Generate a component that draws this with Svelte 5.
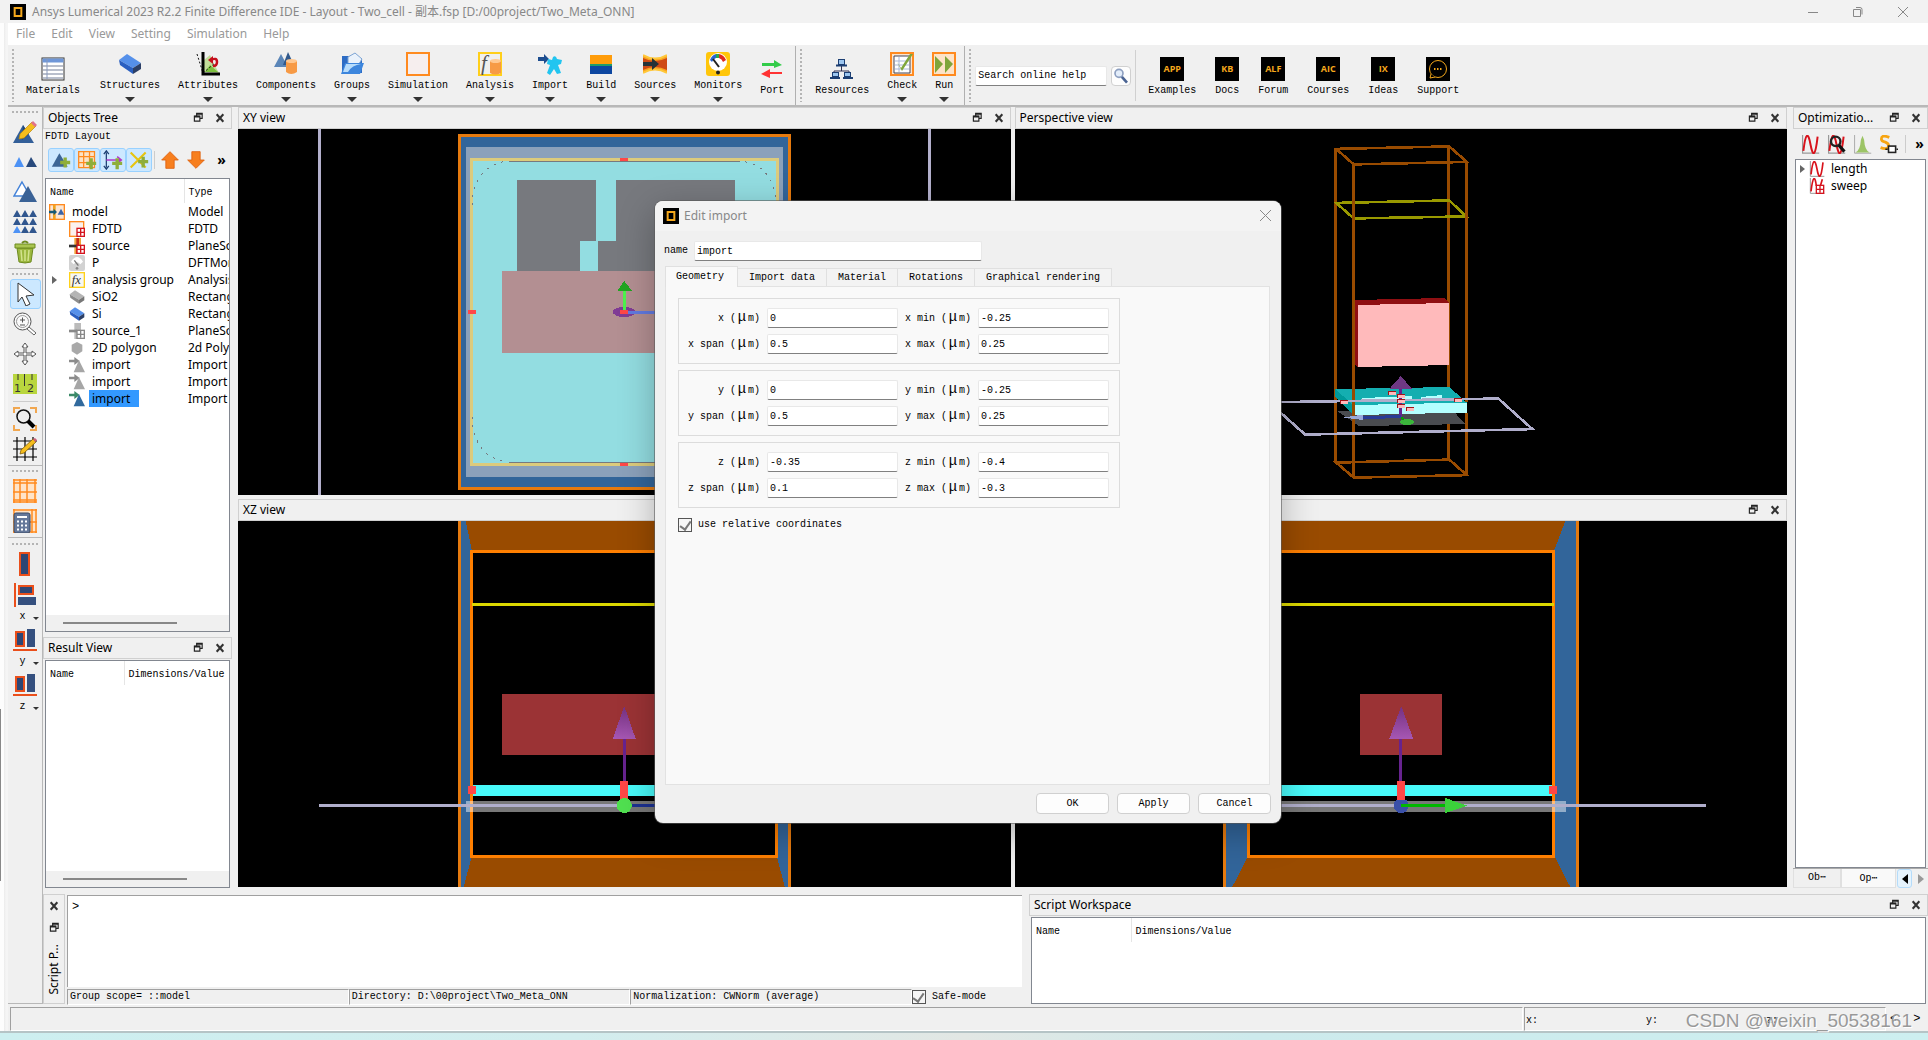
<script>
  const icons = {
    materials: `<rect x="1" y="1" width="22" height="22" fill="#fff" stroke="#333"/><rect x="1.500" y="1.500" width="21" height="4" fill="#6f97d8"/><path d="M2 9h20M2 13h20M2 17h20M2 21h20" stroke="#b9bfcc" stroke-width="2"/><path d="M6 2v20" stroke="#8899bb"/>`,
    box: `<path d="M1 8 9 2l14 9-8 5z" fill="#5590ea"/><path d="M1 8l14 8v6L2 13z" fill="#2a5fc0"/><path d="M15 16l8-5v6l-8 5z" fill="#2c3f66"/>`,
    grayBox: `<path d="M1 8 9 2l14 9-8 5z" fill="#b5b5b5"/><path d="M1 8l14 8v6L2 13z" fill="#8d8d8d"/><path d="M15 16l8-5v6l-8 5z" fill="#777"/>`,
    attributes: `<path d="M8 20V8l6-5 4 9 5 9z" fill="#c3dc9a"/><path d="M9 20l5-7 8 7z" fill="#7cc03e"/><path d="M1 2l6 19 12-10" fill="none" stroke="#111" stroke-dasharray="2 2"/><path d="M7 0v22h17" fill="none" stroke="#000" stroke-width="3"/><path d="M15 8q6-3 6 2 0 4-4 4" fill="none" stroke="#c40f1c" stroke-width="2.500"/><path d="M17 4l-5 4 5 4z" fill="#c40f1c"/>`,
    components: `<path d="M7 2l7 13H0z" fill="#5b86b8"/><path d="M14 0l6 13H9z" fill="#31598c"/><path d="M12 9v11q5 4 11 0V9z" fill="#f79a45"/><ellipse cx="17.500" cy="9" rx="5.500" ry="2" fill="#ffc891"/>`,
    groups: `<path d="M2 4h7l2 2h11v15H2z" fill="#2d6cc4"/><path d="M8 5l7-4 7 6-5 8H8z" fill="#eaf2fb" stroke="#7da4d4"/><path d="M1 22L5 11h19l-4 11z" fill="#3d86dd"/><path d="M3 20l3-8h15q-9 1-13 8z" fill="#b7dcfb"/>`,
    simulation: `<rect x="1" y="1" width="22" height="22" fill="#f6eeee" stroke="#ff8a1f" stroke-width="2"/>`,
    analysis: `<rect x="1" y="1" width="22" height="22" fill="#f0f0ee" stroke="#ffcf1a" stroke-width="2"/><text x="3" y="18" font-family="Liberation Serif, serif" font-style="italic" font-size="21" fill="#555">f</text><path d="M12 9v12q5 3 11 0V9z" fill="#f79a45"/><ellipse cx="17.500" cy="9" rx="5.500" ry="2" fill="#ffc891"/>`,
    importing: `<path d="M0 5h6V2l5 5-5 5V9H0z" fill="#1d4d8f"/><path d="M15 5q3-2 4 2l5 1-1 4-3 1 3 8-4 1-3-5-4 6-3-2 3-8-3-1 1-5 4 1z" fill="#22c5f0"/>`,
    build: `<rect x="1" y="3" width="22" height="9" fill="#ff9c0a"/><path d="M1 12h22v10H1z" fill="#0d47a1"/><path d="M1 12h22v2H1z" fill="#1e9c6c"/>`,
    sources: `<path d="M0 3q12 7 24 0v18q-12-7-24 0z" fill="#f9a321"/><path d="M0 6q12 6 24 0v12q-12-6-24 0z" fill="#cf4a15"/><path d="M0 3q12 7 24 0M0 21q12-7 24 0" fill="none" stroke="#ffc83a" stroke-width="2"/><path d="M0 10h9V6l7 6-7 6v-4H0z" fill="#263238"/>`,
    monitors: `<rect width="24" height="24" rx="3" fill="#ffc60a"/><circle cx="12" cy="10" r="9" fill="#fff"/><path d="M4 8q2-5 6-6v4Q7 7 6 10z" fill="#2763d0"/><path d="M10 2h3v4h-3z" fill="#29a84b"/><path d="M13 2q5 1 7 6l-3 2q-1-3-4-4z" fill="#e02a1d"/><path d="M7 7l6 8" stroke="#222" stroke-width="2"/><circle cx="12" cy="20.500" r="2" fill="#222"/>`,
    port: `<path d="M2 6h12V3l8 5-8 3V9H2z" fill="#33cc49"/><path d="M22 15H10v-3l-9 5 9 4v-4h12z" fill="#f33"/>`,
    resources: `<path d="M11.500 9v5M4 18v-4h15v4" fill="none" stroke="#335" stroke-width="1"/><g fill="#9cc6f0" stroke="#1d3f73"><rect x="8.500" y="2.500" width="6" height="5"/><rect x="2.500" y="15.500" width="6" height="4"/><rect x="14.500" y="15.500" width="6" height="4"/></g><path d="M6 8.500h11M0 21h10M13 21h10" stroke="#1d3f73" stroke-width="2"/>`,
    check: `<rect x="1" y="1" width="22" height="22" fill="#fbe5cf" stroke="#ff8a1f" stroke-width="2"/><path d="M4 4h16v17H4z" fill="#fff" stroke="#445"/><path d="M5 9h14M5 13h14M5 17h14M9 5v15" stroke="#a9b7d8"/><path d="M7 10l4 6L20 2h3L12 19z" fill="#80a63c"/>`,
    run: `<rect x="1" y="1" width="22" height="22" fill="#fde3c8" stroke="#ff8a1f" stroke-width="2"/><path d="M3 4l8 8-8 9zM13 4l8 8-8 9z" fill="#7fa53a"/>`,
    support: `<circle cx="12" cy="12" r="8.500" fill="none" stroke="#f2a71b"/><path d="M5 17l-1 4 5-1" fill="#000" stroke="#f2a71b"/><path d="M8 12h8" stroke="#f2a71b" stroke-width="2" stroke-dasharray="1.500 1.500"/>`,
    editPencil: `<path d="M10 5l11 18H0z" fill="#335f99"/><path d="M10 5l6 9-7 6z" fill="#24487a"/><path d="M6 19l1-5L19 2l4 4L11 18z" fill="#f5bd1c" stroke="#b98708" stroke-width=".7"/><path d="M18 3l2-2 4 4-2 2z" fill="#e0728a"/>`,
    twoTriangles: `<path d="M6 7l5 10H1z" fill="#4d92f5"/><path d="M18 7l6 10H13z" fill="#28497c"/>`,
    copy: `<path d="M9 2l8 14H1z" fill="#fff" stroke="#4382d8" stroke-width="1.500"/><path d="M15 6l9 16H6z" fill="#3a6296"/>`,
    grid9: `<g fill="#30568e"><path d="M4 0l4 7H0zM12 0l4 7H8zM20 0l4 7h-8zM4 8l4 7H0zM12 8l4 7H8zM20 8l4 7h-8zM12 16l4 7H8zM20 16l4 7h-8z"/><path d="M4 16l4 7H0z" fill="#4d92f5"/></g>`,
    trash: `<path d="M4 8h16l-2 14q-6 2-12 0z" fill="#9cb83f" stroke="#6d8a1f"/><path d="M2 4h20v4H2z" fill="#a9c450" stroke="#6d8a1f"/><path d="M9 3q3-3 6 0" fill="none" stroke="#6d8a1f" stroke-width="2"/><path d="M8 10l1 11M12 10v11M16 10l-1 11" stroke="#d3e38e" stroke-width="1.500"/>`,
    cursor: `<path d="M5 1l16 12-8 1 4 8-4 2-4-9-4 5z" fill="#fff" stroke="#333"/>`,
    zoomTool: `<circle cx="9.500" cy="9.500" r="8.500" fill="#fafafa" stroke="#555"/><circle cx="9.500" cy="9.500" r="6" fill="none" stroke="#999"/><path d="M7 8h5M9.500 5.500v5M7 13h5" stroke="#555"/><path d="M16 15l7 6-2 2-7-6z" fill="#fff" stroke="#666"/>`,
    move: `<path d="M12 1l3 4h-2v6h6V9l4 3-4 3v-2h-6v6h2l-3 4-3-4h2v-6H5v2l-4-3 4-3v2h6V5H9z" fill="#fff" stroke="#555"/>`,
    ruler: `<rect y="2" width="24" height="20" fill="#b9d63e"/><path d="M5 2v6M11.500 2v12M19 2v6" stroke="#333"/><text x="1" y="20" font-family="DejaVu Sans, sans-serif" font-size="11" fill="#333">1</text><text x="14" y="20" font-family="DejaVu Sans, sans-serif" font-size="11" fill="#333">2</text>`,
    extents: `<path d="M1 6V1h6M17 1h6v5M1 18v5h6M17 23h6v-5" fill="none" stroke="#f1a750" stroke-width="2"/><circle cx="10.500" cy="9.500" r="6.500" fill="#eee" stroke="#111" stroke-width="1.500"/><path d="M15 14l6 6" stroke="#000" stroke-width="4"/>`,
    gridPencil: `<path d="M0 4h24M0 12h24M0 20h24M4 0v24M12 0v24M20 0v24" stroke="#000" stroke-width="1.200"/><path d="M7 17l1-4L20 2l3 3L11 16z" fill="#f5bd1c" stroke="#7d5c08" stroke-width=".8"/><path d="M20 2l2-1 2 2-2 2z" fill="#cc5f78"/>`,
    mesh: `<rect width="24" height="24" fill="#ffe4c8"/><path d="M1 0v24M7 0v24M14 0v24M22 0v24M0 1h24M0 4h24M0 13h24M0 21h24M0 23h24" stroke="#ff8a1f" stroke-width="1.500"/>`,
    calc: `<rect width="24" height="24" fill="#ffe4c8"/><path d="M1 0v24M19 0v24M23 0v24M0 1h24M0 13h24M0 23h24" stroke="#ff8a1f" stroke-width="1.500"/><rect x="1" y="4" width="16" height="20" rx="2" fill="#65789a" stroke="#3b4a67"/><path d="M4 8h10" stroke="#fff" stroke-width="2"/><path d="M4 12.500h10M4 16.500h10M4 20.500h10" stroke="#fff" stroke-width="2" stroke-dasharray="2 2"/>`,
    alignOne: `<rect x="7" y="1" width="9" height="22" fill="#2e4674" stroke="#ea4f1b" stroke-width="2"/>`,
    alignX: `<path d="M2 0v24" stroke="#ea4f1b" stroke-width="2"/><rect x="6" y="3" width="14" height="8" fill="#2e4674" stroke="#ea4f1b" stroke-width="2"/><path d="M5 14h18v8H5z" fill="#35507f"/>`,
    alignY: `<path d="M0 22h24" stroke="#ea4f1b" stroke-width="2"/><rect x="3" y="4" width="8" height="14" fill="#2e4674" stroke="#ea4f1b" stroke-width="2"/><path d="M14 1h8v18h-8z" fill="#35507f"/>`,
    addStructure: `<path d="M10 4l10 16H1z" fill="#3c6595"/><path d="M17 9v12M11 15h12" stroke="#8fae3a" stroke-width="4"/>`,
    addMesh: `<rect x="2" y="2" width="19" height="19" fill="#fbe2c6"/><path d="M2 2h19v19H2zM8 2v19M15 2v19M2 8h19M2 15h19" fill="none" stroke="#ff8a1f" stroke-width="1.500"/><path d="M17 10v13M11 16h12" stroke="#8fae3a" stroke-width="4"/>`,
    addSource: `<path d="M4 3v18M1 5l3-4 3 4M1 19l3 4 3-4" fill="none" stroke="#1d3f73" stroke-width="1.500"/><path d="M4 12h17M17 8l5 4-5 4" fill="none" stroke="#b138c9" stroke-width="1.800"/><path d="M17 10v13M11 16h12" stroke="#8fae3a" stroke-width="4"/>`,
    addMonitor: `<path d="M2 3l18 18M2 21L20 3" stroke="#e7c410" stroke-width="2.500"/><path d="M17 8v13M11 14h12" stroke="#8fae3a" stroke-width="4"/>`,
    up: `<path d="M12 2l10 10h-5v10H7V12H2z" fill="#f77f1f" stroke="#dd5e0b"/>`,
    down: `<path d="M12 22L2 12h5V2h10v10h5z" fill="#f77f1f" stroke="#dd5e0b"/>`,
    model: `<rect x="1" y="1" width="22" height="22" fill="#fbe6d2" stroke="#ff8a1f" stroke-width="2"/><path d="M8 1v22" stroke="#f1a31f" stroke-width="4"/><path d="M0 10h7V7l5 5-5 5v-3H0z" fill="#155a77"/><path d="M18 7l5 9H13z" fill="#3b64a8"/>`,
    fdtd: `<rect x="1" y="1" width="21" height="22" fill="#fbf2ee" stroke="#ff8a1f" stroke-width="2"/><path d="M11 10h13v14H11z" fill="#d4141e"/><path d="M13 12h9v10h-9z" fill="#fff"/><path d="M17.500 12v10M12 17h11" stroke="#d4141e" stroke-width="2"/>`,
    source: `<path d="M8 0h10v24H8z" fill="#f0a43a"/><path d="M11 0h4v24h-4z" fill="#c32b18"/><path d="M0 10h12v4H0z" fill="#333"/><path d="M11 10h13v14H11z" fill="#d4141e"/><path d="M13 12h9v10h-9z" fill="#fff"/><path d="M17.500 12v10M12 17h11" stroke="#d4141e" stroke-width="2"/>`,
    graySource: `<path d="M8 0h10v24H8z" fill="#bbb"/><path d="M0 10h12v4H0z" fill="#888"/><path d="M11 10h13v14H11z" fill="#888"/><path d="M13 12h9v10h-9z" fill="#fff"/><path d="M17.500 12v10M12 17h11" stroke="#888" stroke-width="2"/>`,
    grayMonitor: `<rect width="24" height="24" rx="3" fill="#d2d2d2"/><path d="M3 10q9-14 18 0l-4 4q-5-6-10 0z" fill="#fff"/><path d="M8 8l6 8" stroke="#777" stroke-width="2"/><circle cx="12" cy="20" r="2" fill="#888"/>`,
    fx: `<rect x="1" y="1" width="22" height="22" fill="#f6f6f4" stroke="#ffd11a" stroke-width="2"/><text x="4" y="18" font-family="Liberation Serif, serif" font-style="italic" font-size="19" fill="#333">fx</text>`,
    hexagon: `<path d="M12 3l8 4v10l-8 5-8-5V7z" fill="#a9a9a9"/>`,
    grayImport: `<path d="M0 4h8V0l8 6-8 6V8H0z" fill="#8c8c8c"/><path d="M15 5l9 18H7z" fill="#a6a6a6"/>`,
    greenImport: `<path d="M0 4h8V0l8 6-8 6V8H0z" fill="#3b8a68"/><path d="M15 5l9 18H7z" fill="#316a9d"/>`,
    wave: `<path d="M2 0v23h21" fill="none" stroke="#999" stroke-width="1.500"/><path d="M3 20C6-4 9-4 12 12s6 16 9-10" fill="none" stroke="#d8121b" stroke-width="2.500"/>`,
    waveZoom: `<path d="M2 0v23h21" fill="none" stroke="#999" stroke-width="1.500"/><path d="M3 20C6-4 9-4 12 12s6 16 9-10" fill="none" stroke="#d8121b" stroke-width="2.500"/><circle cx="11" cy="8" r="6" fill="none" stroke="#222" stroke-width="3"/><path d="M15 13l7 8" stroke="#111" stroke-width="4"/>`,
    peak: `<path d="M2 0v23h21" fill="none" stroke="#999"/><path d="M3 22q6-2 7-16l2-5 2 5q1 14 7 16z" fill="#9cc466"/>`,
    sBox: `<path d="M13 3Q3-1 3 5q0 3 5 4 5 2 4 6-2 4-10 1" fill="none" stroke="#f7a511" stroke-width="3.500"/><rect x="12" y="14" width="9" height="8" fill="#fff" stroke="#222" stroke-width="2"/><path d="M8 18h3M22 18h2" stroke="#222" stroke-width="2"/>`,
    sweep: `<path d="M2 0v23h21" fill="none" stroke="#999" stroke-width="1.500"/><path d="M3 20C6-4 9-4 11 12M17 12l3-10" fill="none" stroke="#d8121b" stroke-width="2.500"/><path d="M10 10h13v14H10z" fill="#d4141e"/><path d="M12 12h9v10h-9z" fill="#fff"/><path d="M16.500 12v10M11 17h11" stroke="#d4141e" stroke-width="2"/>`,
    magnifier: `<path d="M13 13l8 9" stroke="#4a6392" stroke-width="4"/><circle cx="9" cy="8" r="6" fill="#e3edfa" stroke="#8d9fc0" stroke-width="2.500"/>`,
    logo: `<rect width="24" height="24" fill="#000"/><rect x="7" y="6" width="10" height="12" fill="none" stroke="#f5a81c" stroke-width="3"/>`,
    float: `<path d="M8 8V3h12v11h-5M3 9h12v11H3z" fill="none" stroke="#222" stroke-width="2.500"/><path d="M8 4h12M3 10h12" stroke="#222" stroke-width="4"/>`,
    close: `<path d="M4 3l16 18M20 3L4 21" stroke="#333" stroke-width="5"/>`
  };

  const menus = ["File", "Edit", "View", "Setting", "Simulation", "Help"];

  const mainTools = [
    { label: "Materials", icon: "materials" },
    { label: "Structures", icon: "box", menu: true },
    { label: "Attributes", icon: "attributes", menu: true },
    { label: "Components", icon: "components", menu: true },
    { label: "Groups", icon: "groups", menu: true },
    { label: "Simulation", icon: "simulation", menu: true },
    { label: "Analysis", icon: "analysis", menu: true },
    { label: "Import", icon: "importing", menu: true },
    { label: "Build", icon: "build", menu: true },
    { label: "Sources", icon: "sources", menu: true },
    { label: "Monitors", icon: "monitors", menu: true },
    { label: "Port", icon: "port" }
  ];

  const runTools = [
    { label: "Resources", icon: "resources" },
    { label: "Check", icon: "check", menu: true },
    { label: "Run", icon: "run", menu: true }
  ];

  const helpLinks = [
    { label: "Examples", badge: "APP" },
    { label: "Docs", badge: "KB" },
    { label: "Forum", badge: "ALF" },
    { label: "Courses", badge: "AIC" },
    { label: "Ideas", badge: "IX" },
    { label: "Support" }
  ];

  const sideGroups = [
    { id: "edit", tools: ["editPencil", "twoTriangles", "copy", "grid9", "trash"] },
    { id: "mouse", tools: ["cursor", "zoomTool", "move", "ruler"], extra: ["extents", "gridPencil"] },
    { id: "mesh", tools: ["mesh", "calc"] }
  ];

  const alignTools = [
    { icon: "alignX", axis: "x" },
    { icon: "alignY", axis: "y" },
    { icon: "alignY", axis: "z" }
  ];

  const objects = [
    { name: "model", type: "Model", icon: "model", root: true },
    { name: "FDTD", type: "FDTD", icon: "fdtd" },
    { name: "source", type: "PlaneSource", icon: "source" },
    { name: "P", type: "DFTMonitor", icon: "grayMonitor" },
    { name: "analysis group", type: "Analysis", icon: "fx", closed: true },
    { name: "SiO2", type: "Rectangle", icon: "grayBox" },
    { name: "Si", type: "Rectangle", icon: "box" },
    { name: "source_1", type: "PlaneSource", icon: "graySource" },
    { name: "2D polygon", type: "2d Polygon", icon: "hexagon" },
    { name: "import", type: "Import", icon: "grayImport" },
    { name: "import", type: "Import", icon: "grayImport" },
    { name: "import", type: "Import", icon: "greenImport", selected: true }
  ];

  const tabs = ["Geometry", "Import data", "Material", "Rotations", "Graphical rendering"];

  let name = $state("import");
  let activeTab = $state("Geometry");
  let relative = $state(true);
  let safeMode = $state(true);
  let axes = $state([
    { axis: "x", center: "0", span: "0.5", min: "-0.25", max: "0.25" },
    { axis: "y", center: "0", span: "0.5", min: "-0.25", max: "0.25" },
    { axis: "z", center: "-0.35", span: "0.1", min: "-0.4", max: "-0.3" }
  ]);

  // drag handles in the perspective view
  const handles = [[377, 264], [386, 267], [386, 272], [386, 277], [395, 280], [329, 273], [443, 271]];
</script>

{#snippet icon(id, size)}
  <svg class="icon" width={size} height={size} viewBox="0 0 24 24" aria-hidden="true">{@html icons[id]}</svg>
{/snippet}

{#snippet dockHeader(title)}
  <header class="dock-header">
    <h2>{title}</h2>
    <button aria-label="Float {title}">{@render icon("float", 11)}</button>
    <button aria-label="Close {title}">{@render icon("close", 10)}</button>
  </header>
{/snippet}

{#snippet toolButton(tool)}
  <button class="tool" class:has-menu={tool.menu}>
    {@render icon(tool.icon, 24)}
    <span>{tool.label}</span>
    {#if tool.menu}<i class="caret"></i>{/if}
  </button>
{/snippet}

{#snippet field(axis, suffix, key)}
  <label for="{axis.axis}-{key}">{axis.axis}{suffix} (<span class="mu">μ</span>m)</label>
  <input id="{axis.axis}-{key}" type="text" bind:value={axis[key]} />
{/snippet}

<div class="screen">
  <div class="titlebar">
    {@render icon("logo", 16)}
    <h1>Ansys Lumerical 2023 R2.2 Finite Difference IDE - Layout - Two_cell - 副本.fsp [D:/00project/Two_Meta_ONN]</h1>
    <div class="window-buttons">
      <button aria-label="Minimize"><svg width="10" height="10"><path d="M0 5.500h10" stroke="#888" /></svg></button>
      <button aria-label="Restore"><svg width="10" height="10"><path d="M.5 2.500h7v7h-7zM3 .5h4q2 0 2 2v5" fill="none" stroke="#888" /></svg></button>
      <button aria-label="Close"><svg width="10" height="10"><path d="M0 0l10 10M10 0L0 10" stroke="#888" /></svg></button>
    </div>
  </div>

  <div class="desk">
    <div class="desk-edge"><div class="desk-thumb"></div></div>

    <div class="ide">
      <nav class="menubar">
        {#each menus as menu}
          <button>{menu}</button>
        {/each}
      </nav>

      <div class="toolbar">
        <div class="grip"></div>
        <div class="tool-group main-group">
          {#each mainTools as tool}{@render toolButton(tool)}{/each}
        </div>
        <div class="bar-end"></div>
        <div class="grip"></div>
        <div class="tool-group run-group">
          {#each runTools as tool}{@render toolButton(tool)}{/each}
        </div>
        <div class="bar-end"></div>
        <div class="grip"></div>
        <input class="search" type="text" value="Search online help" aria-label="Search online help" />
        <button class="search-button" aria-label="Search">{@render icon("magnifier", 16)}</button>
        <div class="divider"></div>
        <div class="tool-group links">
          {#each helpLinks as link}
            <a class="tool" href="#{link.label}">
              <span class="badge">
                {#if link.badge}{link.badge}{:else}{@render icon("support", 24)}{/if}
              </span>
              <span>{link.label}</span>
            </a>
          {/each}
        </div>
      </div>

      <div class="workspace">
        <aside class="side">
          {#each sideGroups as group (group.id)}
            <div class="side-group">
              <div class="side-grip"></div>
              {#each group.tools as tool}
                <button class:active={tool === "cursor"} aria-label={tool}>{@render icon(tool, 24)}</button>
              {/each}
              {#if group.extra}
                <hr />
                {#each group.extra as tool}
                  <button aria-label={tool}>{@render icon(tool, 24)}</button>
                {/each}
              {/if}
            </div>
          {/each}
          <div class="side-group last">
            <div class="side-grip"></div>
            <button aria-label="align">{@render icon("alignOne", 24)}</button>
            {#each alignTools as tool}
              <button class="align" aria-label="align {tool.axis}">
                {@render icon(tool.icon, 24)}
                <span>{tool.axis}<i class="caret small"></i></span>
              </button>
            {/each}
          </div>
        </aside>

        <div class="docks">
          <div class="upper">
            <div class="left-docks">
              <section class="objects">
                {@render dockHeader("Objects Tree")}
                <p class="mode">FDTD Layout</p>
                <div class="mini-tools">
                  <button class="on" aria-label="Show structures">{@render icon("addStructure", 20)}</button>
                  <button class="on" aria-label="Show meshes">{@render icon("addMesh", 20)}</button>
                  <button class="on" aria-label="Show sources">{@render icon("addSource", 20)}</button>
                  <button class="on" aria-label="Show monitors">{@render icon("addMonitor", 20)}</button>
                  <div class="mini-divider"></div>
                  <button aria-label="Move up">{@render icon("up", 20)}</button>
                  <button aria-label="Move down">{@render icon("down", 20)}</button>
                  <button class="more">»</button>
                </div>
                <div class="list">
                  <div class="list-body">
                    <table class="tree">
                      <thead>
                        <tr><th>Name</th><th>Type</th></tr>
                      </thead>
                      <tbody>
                        {#each objects as object}
                          <tr class:selected={object.selected}>
                            <td>
                              <div class="node" class:root={object.root}>
                                {#if object.closed}<i class="expander"></i>{/if}
                                {@render icon(object.icon, 16)}
                                <span>{object.name}</span>
                              </div>
                            </td>
                            <td>{object.type}</td>
                          </tr>
                        {/each}
                      </tbody>
                    </table>
                  </div>
                  <div class="scrollbar"><div class="thumb"></div></div>
                </div>
              </section>

              <section class="results">
                {@render dockHeader("Result View")}
                <div class="list">
                  <div class="list-body">
                    <table class="values">
                      <thead>
                        <tr><th>Name</th><th>Dimensions/Value</th></tr>
                      </thead>
                    </table>
                  </div>
                  <div class="scrollbar"><div class="thumb wide"></div></div>
                </div>
              </section>
            </div>

            <div class="views">
              <section class="view">
                {@render dockHeader("XY view")}
                <svg class="canvas" viewBox="0 0 773 366" preserveAspectRatio="xMidYMid slice" shape-rendering="crispEdges">
                  <path d="M80 0h3v366h-3zM690 0h3v366h-3z" fill="#b3b0cc" />
                  <rect x="221.500" y="6.500" width="330" height="353" fill="#32659a" stroke="#e67a0e" stroke-width="3" />
                  <rect x="228" y="18" width="317" height="330" fill="#8ba1bb" />
                  <rect x="233.500" y="30.500" width="306" height="305" fill="#93dde1" stroke="#dccb7c" stroke-width="3" />
                  <path d="M271 32.500h231M271 333.500h231" stroke="#77797e" />
                  <path
                    d="M235 76V68Q240 35 271 32M538 76V68Q533 35 502 32M235 288v8q5 34 36 37M538 288v8q-5 34-36 37"
                    fill="none"
                    stroke="#77797e"
                    stroke-dasharray="2 6"
                  />
                  <path d="M279 51h79v61h-16v30h-63zM378 51h119v91H360v-30h18z" fill="#77797e" />
                  <rect x="264" y="142" width="245" height="82" fill="#b38f92" />
                  <ellipse cx="386.500" cy="183" rx="11.500" ry="5" fill="#803c95" />
                  <path d="M385 162h3v20h-3z" fill="#4cf34c" />
                  <path d="M386.500 152l8 10h-15z" fill="#22a522" />
                  <path d="M390 182h60v3h-60z" fill="#627ae0" />
                  <path d="M382 29h8v3h-8zM382 334h8v3h-8zM230 181h8v4h-8zM382 181h8v4h-8z" fill="#ff4747" />
                </svg>
              </section>

              <section class="view">
                {@render dockHeader("Perspective view")}
                <svg class="canvas" viewBox="0 0 772 366" preserveAspectRatio="xMidYMid slice" shape-rendering="crispEdges">
                  <path
                    d="M321 20L434 17.500L451.500 33L338.500 35.500zM321 333.500L434 330.500L451.500 346L338.500 348.500zM320.500 20V333M433.500 18V330"
                    fill="none"
                    stroke="#994b00"
                    stroke-width="2.600"
                  />
                  <path d="M321 74L434 71.500L451 87.500L338.500 89.500z" fill="none" stroke="#999900" stroke-width="2.600" />
                  <path d="M340 171L429 169L434 174L343 176V238L340 236z" fill="#8f0f12" />
                  <path d="M343 176L434 174V236L343 238z" fill="#ffbabb" />
                  <path d="M322 282L440 284L450 295L344 297z" fill="#4a4c50" />
                  <path d="M320 260L434 258L452 274L338 276z" fill="#14aeb0" />
                  <path d="M320 260L338 276V286L320 268z" fill="#009a9a" />
                  <path d="M338 276L452 273.500V283.500L338 286zM346 269l51-2v3l-47 2zM405 268l22-2v5l-19 1z" fill="#b5ffff" />
                  <path d="M338.500 35V348M451.500 33V273M451.500 284V346" stroke="#994b00" stroke-width="3" />
                  <path d="M240 273.500L483 269.500L517 300L290 305.500L250 270" fill="none" stroke="#b0aecb" stroke-width="2.600" />
                  <path d="M385.500 258V288" stroke="#67238f" stroke-width="3" />
                  <path d="M385.500 247L397 260H374z" fill="#6f3884" />
                  <path d="M348 288.500L386 287.500" stroke="#2a3c96" stroke-width="3" />
                  <path d="M328 288.500L348 285.500V291z" fill="#9aa8d8" />
                  <path d="M386 288l5 5" stroke="#00a000" stroke-width="2" />
                  <ellipse cx="392" cy="293" rx="7" ry="3" fill="#3bb53b" />
                  {#each handles as [x, y]}
                    <rect x={x - 4} y={y - 2} width="8" height="4" fill="#a01418" />
                    <rect x={x - 3} y={y - 1} width="7" height="3" fill="#ffbabb" />
                  {/each}
                </svg>
              </section>

              <section class="view">
                {@render dockHeader("XZ view")}
                <svg class="canvas" viewBox="0 0 773 366" preserveAspectRatio="xMidYMid slice" shape-rendering="crispEdges">
                  <defs>
                    <linearGradient id="cone" x2="0" y2="1">
                      <stop offset="0" stop-color="#74307f" />
                      <stop offset="1" stop-color="#a657b4" />
                    </linearGradient>
                  </defs>
                  <path d="M220 0h333v366H220z" fill="#32659a" />
                  <path d="M228 0h317l-6 29v306l8 31H226l8-31V29z" fill="#994b00" />
                  <path d="M221.500 0v366M551.500 0v366" stroke="#e67a0e" stroke-width="3" />
                  <rect x="233.500" y="30.500" width="305" height="305" fill="#000" stroke="#ff7f00" stroke-width="3" />
                  <path d="M234 82h303v3H234z" fill="#dcd800" />
                  <rect x="264" y="173" width="245" height="61" fill="#9b3335" />
                  <rect x="235" y="264" width="303" height="11" fill="#48fafa" />
                  <rect x="228" y="280" width="317" height="11" fill="#fff" fill-opacity=".47" />
                  <path d="M81 283h611v3H81z" fill="#b0aecb" />
                  <path d="M390 283h60v3h-60z" fill="#1c3191" />
                  <path d="M385 216h3v44h-3z" fill="#67238f" />
                  <path d="M386.500 185l11.500 33h-23z" fill="url(#cone)" />
                  <path d="M230 265h8v8h-8zM382 260h8v20h-8z" fill="#ff4747" />
                  <circle cx="386.500" cy="284.500" r="7.500" fill="#50e050" />
                </svg>
              </section>

              <section class="view">
                {@render dockHeader("YZ view")}
                <svg class="canvas" viewBox="0 0 772 366" preserveAspectRatio="xMidYMid slice" shape-rendering="crispEdges">
                  <path d="M208 0h356v366H208z" fill="#32659a" />
                  <path d="M222 0h328l-11 29v306l16 31H217l16-31V29z" fill="#994b00" />
                  <path d="M209.500 0v366M562.500 0v366" stroke="#e67a0e" stroke-width="3" />
                  <rect x="233.500" y="30.500" width="305" height="305" fill="#000" stroke="#ff7f00" stroke-width="3" />
                  <path d="M235 82h304v3H235z" fill="#dcd800" />
                  <rect x="345" y="173" width="82" height="61" fill="#9b3335" />
                  <rect x="235" y="264" width="302" height="11" fill="#48fafa" />
                  <rect x="221" y="280" width="330" height="11" fill="#fff" fill-opacity=".47" />
                  <path d="M81 283h610v3H81z" fill="#b0aecb" />
                  <circle cx="386" cy="284.500" r="7.500" fill="#3a50a8" />
                  <path d="M386 283h44v3h-44z" fill="#00b800" />
                  <path d="M430 277l22 7.500-22 7.500z" fill="#3bd13b" />
                  <path d="M384 216h3v44h-3z" fill="#67238f" />
                  <path d="M386 185l12 33h-24z" fill="url(#cone)" />
                  <path d="M534 265h8v8h-8zM382 260h8v19h-8z" fill="#ff4747" />
                </svg>
              </section>
            </div>

            <section class="sweeps">
              {@render dockHeader("Optimizatio...")}
              <div class="sweep-tools">
                <button aria-label="Optimization">{@render icon("wave", 19)}</button>
                <button aria-label="Inspect">{@render icon("waveZoom", 19)}</button>
                <button aria-label="Yield">{@render icon("peak", 19)}</button>
                <button aria-label="S parameters">{@render icon("sBox", 19)}</button>
                <div class="mini-divider"></div>
                <button class="more">»</button>
              </div>
              <ul class="sweep-list">
                <li><i class="expander"></i>{@render icon("wave", 16)}<span>length</span></li>
                <li>{@render icon("sweep", 16)}<span>sweep</span></li>
              </ul>
              <div class="sweep-tabs">
                <button class="tab-back">Ob⋯</button>
                <button class="tab-front">Op⋯</button>
                <button class="page-left" aria-label="Previous"><i></i></button>
                <button class="page-right" aria-label="Next"><i></i></button>
              </div>
            </section>
          </div>

          <div class="lower">
            <section class="prompt">
              <header class="prompt-header">
                <button aria-label="Close Script Prompt">{@render icon("close", 10)}</button>
                <button aria-label="Float Script Prompt">{@render icon("float", 11)}</button>
                <h2>Script P...</h2>
              </header>
              <div class="prompt-body">
                <textarea aria-label="Script prompt" spellcheck="false">&gt;</textarea>
                <div class="prompt-status">
                  <span>Group scope= ::model</span>
                  <span>Directory: D:\00project\Two_Meta_ONN</span>
                  <span>Normalization: CWNorm (average)</span>
                  <label><input type="checkbox" bind:checked={safeMode} />Safe-mode</label>
                </div>
              </div>
            </section>

            <section class="script-values">
              {@render dockHeader("Script Workspace")}
              <div class="list">
                <table class="values">
                  <thead>
                    <tr><th>Name</th><th>Dimensions/Value</th></tr>
                  </thead>
                </table>
              </div>
            </section>
          </div>
        </div>
      </div>

      <footer class="statusbar">
        <div class="message"></div>
        <div class="coords"><span>x:</span><span>y:</span><span>z:</span></div>
        <div class="pager"><span>&lt;</span><span>&gt;</span></div>
      </footer>
    </div>
  </div>

  <div class="taskbar"></div>

  <div class="dialog" role="dialog" aria-label="Edit import">
    <div class="dialog-title">
      {@render icon("logo", 16)}
      <h2>Edit import</h2>
      <button aria-label="Close dialog"><svg width="11" height="11"><path d="M0 0l11 11M11 0L0 11" stroke="#888" /></svg></button>
    </div>
    <div class="name-row">
      <label for="name">name</label>
      <input id="name" type="text" bind:value={name} />
    </div>
    <div class="tabs" role="tablist">
      {#each tabs as tab}
        <button role="tab" aria-selected={tab === activeTab} class:active={tab === activeTab} onclick={() => (activeTab = tab)}>
          {tab}
        </button>
      {/each}
    </div>
    <div class="pane">
      {#each axes as axis}
        <div class="axis-box">
          {@render field(axis, "", "center")}
          {@render field(axis, " min", "min")}
          {@render field(axis, " span", "span")}
          {@render field(axis, " max", "max")}
        </div>
      {/each}
      <label class="relative"><input type="checkbox" bind:checked={relative} />use relative coordinates</label>
    </div>
    <div class="dialog-buttons">
      <button>OK</button>
      <button>Apply</button>
      <button>Cancel</button>
    </div>
  </div>

  <div class="watermark">CSDN @weixin_50538161</div>
</div>

<style>
  :global(body) {
    margin: 0;
    background: #f0f0f0;
  }

  .screen,
  .screen * {
    box-sizing: border-box;
  }

  .screen {
    --mono: "Liberation Mono", monospace;
    --ui: "Noto Sans", "Noto Sans CJK SC", sans-serif;
    position: relative;
    display: flex;
    flex-direction: column;
    height: 100vh;
    overflow: hidden;
    font: 10px/14px var(--mono);
    color: #000;
  }

  button,
  input,
  textarea {
    font: inherit;
    color: inherit;
  }

  button {
    display: flex;
    align-items: center;
    justify-content: center;
    margin: 0;
    padding: 0;
    border: none;
    background: none;
  }

  h1,
  h2,
  p,
  ul {
    margin: 0;
    padding: 0;
    font-weight: normal;
  }

  .icon {
    display: block;
    flex: none;
  }

  .titlebar {
    display: flex;
    flex: none;
    align-items: center;
    gap: 6px;
    height: 23px;
    padding: 0 20px 0 10px;
    background: #f2f2f2;
  }

  .titlebar h1 {
    flex: 1;
    font: 12px/16px var(--ui);
    color: #888;
  }

  .window-buttons {
    display: flex;
    gap: 35px;
  }

  .desk {
    display: flex;
    flex: 1;
    min-height: 0;
  }

  .desk-edge {
    display: flex;
    flex: none;
    align-items: flex-end;
    width: 8px;
    padding-bottom: 150px;
    background: linear-gradient(to right, #fdfdfd 4px, #ebebeb 4px, #f5f5f5 6px);
  }

  .desk-thumb {
    width: 1px;
    height: 172px;
    background: #888;
  }

  .ide {
    display: flex;
    flex: 1;
    flex-direction: column;
    min-width: 0;
    background: #f0f0f0;
  }

  .menubar {
    display: flex;
    flex: none;
    gap: 16px;
    height: 23px;
    padding: 0 8px;
    border-bottom: 1px solid #f0f0f0;
    background: #fff;
  }

  .menubar button {
    font: 12px/22px var(--ui);
    color: #999;
  }

  .toolbar {
    display: flex;
    flex: none;
    align-items: center;
    height: 61px;
    border-bottom: 2px solid #b8b8b8;
  }

  .grip {
    flex: none;
    width: 2px;
    height: 53px;
    margin-left: 4px;
    background: repeating-linear-gradient(#b4b4b4 0 2px, transparent 2px 4px);
  }

  .tool-group {
    display: flex;
    height: 59px;
    padding: 6px 0 0 3px;
  }

  .tool {
    display: flex;
    flex-direction: column;
    align-items: center;
    justify-content: flex-start;
    height: 53px;
    padding: 5px 9px 0;
    color: #000;
    text-decoration: none;
  }

  .tool span {
    padding-top: 3px;
  }

  .tool.has-menu {
    padding-top: 0;
  }

  .main-group .tool:first-child {
    padding-right: 11px;
  }

  .tool .icon,
  .badge {
    margin: 0 -3px;
  }

  .caret {
    margin-top: 4px;
    border: 5px solid transparent;
    border-top-color: #333;
    border-bottom: none;
  }

  .bar-end {
    width: 1px;
    height: 59px;
    margin-left: 2px;
    background: #b0b0b0;
  }

  .run-group {
    padding-left: 4px;
  }

  .search,
  .dialog input[type="text"] {
    height: 20px;
    padding: 0 2px;
    border: 1px solid #e8e8e8;
    border-bottom-color: #808080;
    border-radius: 2px;
    outline: none;
    background: #fff;
  }

  .search {
    width: 132px;
    margin-left: 4px;
  }

  .search-button {
    width: 20px;
    height: 20px;
    margin-left: 4px;
    border: 1px solid #d0d0d0;
    border-radius: 4px;
    background: #fdfdfd;
  }

  .divider {
    width: 1px;
    height: 51px;
    margin-left: 4px;
    background: #d0d0d0;
  }

  .links {
    gap: 1px;
  }

  .tool .badge {
    display: flex;
    align-items: center;
    justify-content: center;
    width: 24px;
    height: 24px;
    padding: 0;
    background: #000;
    color: #f5a81c;
    font: bold 9px/12px "Open Sans", sans-serif;
  }

  .workspace {
    display: flex;
    flex: 1;
    min-height: 0;
  }

  .side {
    flex: none;
    width: 35px;
    border-right: 1px solid #b8b8b8;
    border-bottom: 1px solid #b8b8b8;
  }

  .side-group {
    display: flex;
    flex-direction: column;
    align-items: center;
    padding-bottom: 1px;
    border-bottom: 1px solid #b8b8b8;
  }

  .side-group.last {
    padding-top: 1px;
    border: none;
  }

  .side-grip {
    width: 27px;
    height: 2px;
    margin: 4px 0;
    background: repeating-linear-gradient(to right, #b4b4b4 0 2px, transparent 2px 4px);
  }

  .side button {
    width: 31px;
    height: 30px;
  }

  .side button.active,
  .mini-tools .on {
    border: 1px solid #99d1ff;
    border-radius: 3px;
    background: #cce8ff;
  }

  .side hr {
    width: 25px;
    margin: 2px 0;
    border: none;
    border-top: 1px solid #ccc;
  }

  .side .align {
    flex-direction: column;
    justify-content: flex-start;
    height: 45px;
    padding-top: 4px;
  }

  .align span {
    display: flex;
    align-items: center;
    gap: 7px;
    padding: 3px 0 0 8px;
  }

  .caret.small {
    margin-top: 3px;
    border-width: 3px 3px 0;
  }

  .docks {
    display: flex;
    flex: 1;
    flex-direction: column;
    gap: 6px;
    min-width: 0;
  }

  .upper {
    display: flex;
    flex: 1;
    gap: 6px;
    min-height: 0;
  }

  .dock-header {
    display: flex;
    flex: none;
    align-items: center;
    gap: 11px;
    height: 22px;
    padding: 0 6px 1px 4px;
    border: 1px solid #d0d0d0;
  }

  .dock-header h2 {
    flex: 1;
    font: 12px/16px var(--ui);
    white-space: nowrap;
  }

  .left-docks {
    display: flex;
    flex: none;
    flex-direction: column;
    gap: 5px;
    width: 189px;
  }

  .objects,
  .results,
  .sweeps,
  .view,
  .script-values {
    display: flex;
    flex-direction: column;
    min-width: 0;
    min-height: 0;
  }

  .objects {
    flex: 525;
  }

  .results {
    flex: 251;
  }

  .mode {
    padding: 1px 2px;
  }

  .mini-tools {
    display: flex;
    flex: none;
    align-items: center;
    height: 24px;
    margin: 3px 4px 5px 5px;
  }

  .mini-tools button {
    width: 26px;
    height: 24px;
  }

  .mini-divider {
    width: 1px;
    height: 18px;
    margin: 0 2px;
    background: #ccc;
  }

  .mini-tools .more,
  .sweep-tools .more {
    flex: 1;
    padding-left: 6px;
    font: bold 14px/16px var(--ui);
  }

  .sweep-tools .more {
    padding: 0;
  }

  .list {
    display: flex;
    flex: 1;
    flex-direction: column;
    min-height: 0;
    margin: 1px 2px 0;
    border: 1px solid #828790;
    background: #fff;
  }

  .list-body {
    flex: 1;
    min-height: 0;
    overflow: hidden;
  }

  .scrollbar {
    flex: none;
    height: 16px;
    padding: 7px 17px;
    background: #f0f0f0;
  }

  .thumb {
    width: 114px;
    height: 2px;
    background: #888;
  }

  .thumb.wide {
    width: 124px;
  }

  table {
    width: 100%;
    border-collapse: collapse;
    table-layout: fixed;
  }

  th {
    height: 24px;
    padding: 4px 4px 0;
    font-weight: normal;
    text-align: left;
    white-space: nowrap;
  }

  th:first-child {
    width: 78px;
    border-right: 1px solid #e5e5e5;
  }

  .tree th:first-child {
    width: 138px;
  }

  .script-values th:first-child {
    width: 99px;
  }

  .tree td {
    height: 17px;
    padding: 0 0 0 4px;
    overflow: hidden;
    font: 12px/17px var(--ui);
    white-space: nowrap;
  }

  .tree td:first-child {
    padding: 0;
  }

  .node {
    display: flex;
    align-items: center;
    justify-content: flex-start;
    gap: 4px;
    padding-left: 23px;
  }

  .node.root {
    padding-left: 3px;
  }

  .node span {
    padding: 0 3px;
  }

  .selected .node span {
    padding-right: 9px;
    background: #3399ff;
  }

  .expander {
    width: 5px;
    margin: 0 8px 0 -17px;
    border: 4px solid transparent;
    border-right: none;
    border-left: 5px solid #666;
  }

  .views {
    display: grid;
    flex: 1;
    grid-template-columns: 1fr 1fr;
    grid-template-rows: 1fr 1fr;
    gap: 4px;
    min-width: 0;
    margin-bottom: 1px;
  }

  .canvas {
    display: block;
    flex: 1;
    width: 100%;
    min-height: 0;
    background: #000;
  }

  .sweeps {
    flex: none;
    width: 135px;
  }

  .sweep-tools {
    display: flex;
    flex: none;
    align-items: center;
    gap: 7px;
    height: 30px;
    padding: 0 2px 0 8px;
  }

  .sweep-tools .mini-divider {
    margin: 0;
  }

  .sweep-list {
    flex: 1;
    margin: 0 2px;
    border: 1px solid #828790;
    background: #fff;
    list-style: none;
  }

  .sweep-list li {
    display: flex;
    align-items: center;
    gap: 6px;
    height: 17px;
    padding-left: 13px;
    font: 12px/17px var(--ui);
  }

  .sweep-list .expander {
    margin: 0 -2px 0 -9px;
  }

  .sweep-tabs {
    display: flex;
    flex: none;
    height: 20px;
    border-top: 1px solid #aaa;
  }

  .tab-back {
    width: 48px;
    border: 1px solid #e0e0e0;
    border-top: none;
  }

  .tab-front {
    width: 55px;
    padding-top: 2px;
    border: 1px solid #e0e0e0;
    border-top: none;
    background: #f9f9f9;
  }

  .page-left,
  .page-right {
    width: 15px;
    margin-left: 1px;
  }

  .page-left {
    border: 1px solid #b5dcfa;
    border-radius: 3px;
    background: #e5f3fd;
  }

  .page-left i,
  .page-right i {
    border: 5px solid transparent;
  }

  .page-left i {
    border-right: 6px solid #000;
    border-left: none;
  }

  .page-right i {
    border-right: none;
    border-left: 6px solid #999;
  }

  .lower {
    display: flex;
    flex: none;
    gap: 7px;
    height: 110px;
  }

  .prompt {
    display: flex;
    flex: 979;
    gap: 2px;
  }

  .prompt-header {
    display: flex;
    flex: none;
    flex-direction: column;
    align-items: center;
    gap: 11px;
    width: 22px;
    padding-top: 6px;
    border: 1px solid #d0d0d0;
  }

  .prompt-header h2 {
    font: 12px/16px var(--ui);
    white-space: nowrap;
    writing-mode: vertical-rl;
    transform: rotate(180deg);
  }

  .prompt-body {
    display: flex;
    flex: 1;
    flex-direction: column;
    gap: 2px;
    padding-top: 1px;
  }

  textarea {
    flex: 1;
    margin: 0;
    padding: 4px;
    border: 1px solid #a0a0a0;
    border-right: none;
    border-bottom: none;
    border-radius: 0;
    outline: none;
    background: #fff;
    font-size: 12px;
    resize: none;
  }

  .prompt-status {
    display: grid;
    grid-template-columns: 1fr 1fr 1fr 110px;
    flex: none;
    height: 15px;
  }

  .prompt-status span {
    padding-left: 2px;
    border: 1px solid #a0a0a0;
    border-right-color: #fff;
    border-bottom-color: #fff;
    line-height: 14px;
  }

  .prompt-status label,
  .relative {
    display: flex;
    align-items: center;
    gap: 6px;
  }

  input[type="checkbox"] {
    display: flex;
    flex: none;
    justify-content: center;
    width: 14px;
    height: 14px;
    margin: 0;
    border: 1px solid #555;
    background: #f6f6f6;
    appearance: none;
  }

  input[type="checkbox"]:checked::after {
    content: "";
    width: 5px;
    height: 9px;
    border: solid #777;
    border-width: 0 2px 2px 0;
    transform: rotate(35deg);
  }

  .script-values {
    flex: 899;
  }

  .statusbar {
    display: flex;
    flex: none;
    gap: 1px;
    height: 27px;
    padding: 3px 0 0 2px;
  }

  .message,
  .coords {
    border: 1px solid #a0a0a0;
    border-right-color: #fff;
    border-bottom-color: #fff;
  }

  .message {
    flex: 1;
  }

  .coords {
    display: grid;
    grid-template-columns: 120px 120px 120px;
    align-items: center;
    width: 362px;
    padding: 3px 0 0 1px;
  }

  .pager {
    display: flex;
    align-items: center;
    gap: 16px;
    width: 41px;
    padding-left: 3px;
    font-size: 12px;
  }

  .taskbar {
    flex: none;
    height: 9px;
    border-top: 2px solid #b5c4c6;
    background: linear-gradient(to right, #cdeff0, #d2edee 30%, #e2e7e4 50%, #cdeaec 65%, #cdeff0);
  }

  .dialog {
    position: absolute;
    top: 201px;
    left: 655px;
    display: flex;
    flex-direction: column;
    width: 626px;
    height: 622px;
    border-radius: 8px;
    background: #f0f0f0;
    box-shadow:
      0 0 0 1px rgba(90, 90, 90, 0.6),
      0 10px 36px rgba(0, 0, 0, 0.28);
  }

  .dialog-title {
    display: flex;
    flex: none;
    align-items: center;
    gap: 5px;
    height: 30px;
    padding: 0 10px 1px 8px;
    border-radius: 8px 8px 0 0;
    background: #f3f3f3;
  }

  .dialog-title h2 {
    flex: 1;
    font: 12px/16px var(--ui);
    color: #888;
  }

  .name-row {
    display: flex;
    align-items: center;
    gap: 6px;
    padding: 10px 9px 4px;
  }

  .name-row input {
    width: 288px;
  }

  .tabs {
    display: flex;
    align-items: flex-end;
    height: 21px;
    padding-left: 10px;
  }

  .tabs button {
    height: 18px;
    padding: 1px 11px 0;
    border: 1px solid #e0e0e0;
    border-bottom: none;
    border-left: none;
    background: #f3f3f3;
  }

  .tabs button.active {
    z-index: 1;
    height: 21px;
    margin-bottom: -1px;
    padding: 0 13px 0 10px;
    border-left: 1px solid #e0e0e0;
    background: #f9f9f9;
  }

  .pane {
    display: flex;
    flex: 1;
    flex-direction: column;
    align-items: flex-start;
    gap: 6px;
    margin: 0 11px 0 10px;
    padding: 11px 12px;
    border: 1px solid #e2e2e2;
    background: #f9f9f9;
  }

  .axis-box {
    display: grid;
    grid-template-columns: 72px 131px 66px 131px;
    gap: 6px 7px;
    align-items: center;
    width: 442px;
    height: 66px;
    padding: 9px;
    border: 1px solid #dcdcdc;
  }

  .axis-box label {
    text-align: right;
    white-space: nowrap;
  }

  .mu {
    display: inline-block;
    width: 12px;
    font-size: 14px;
    line-height: 12px;
    text-align: center;
  }

  .relative {
    padding: 4px 0;
  }

  .dialog-buttons {
    display: flex;
    justify-content: flex-end;
    gap: 8px;
    padding: 8px 10px 9px;
  }

  .dialog-buttons button {
    width: 73px;
    height: 21px;
    border: 1px solid #d0d0d0;
    border-radius: 4px;
    background: #fdfdfd;
  }

  .watermark {
    position: absolute;
    right: 16px;
    bottom: 8px;
    color: #999;
    font: 19px/22px "Liberation Sans", sans-serif;
    text-shadow: 1px 1px 0 #fff;
  }
</style>
